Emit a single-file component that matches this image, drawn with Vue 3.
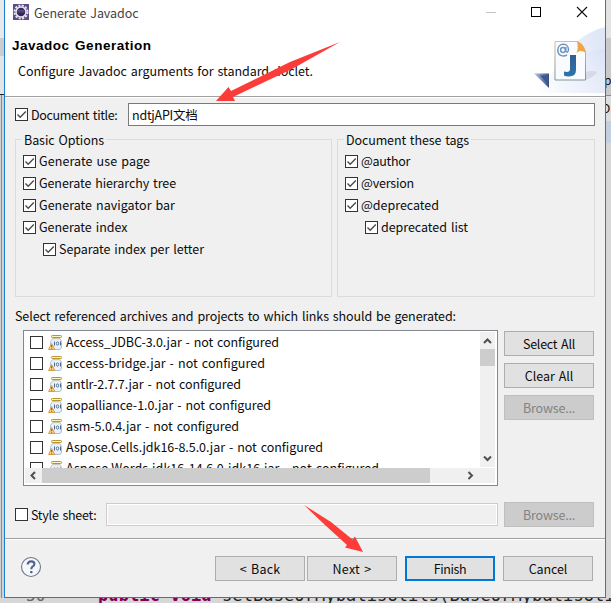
<script setup>
const basicOptions = [
  { text: 'Generate use page', w: 111 },
  { text: 'Generate hierarchy tree', w: 137 },
  { text: 'Generate navigator bar', w: 136 },
  { text: 'Generate index', w: 88.5 },
  { text: 'Separate index per letter', w: 145, sub: true },
]
const tagOptions = [
  { text: '@author', w: 49 },
  { text: '@version', w: 53 },
  { text: '@deprecated', w: 78 },
  { text: 'deprecated list', w: 87, sub: true },
]
const archives = [
  { text: 'Access_JDBC-3.0.jar - not configured', w: 213 },
  { text: 'access-bridge.jar - not configured', w: 199 },
  { text: 'antlr-2.7.7.jar - not configured', w: 175 },
  { text: 'aopalliance-1.0.jar - not configured', w: 205 },
  { text: 'asm-5.0.4.jar - not configured', w: 173 },
  { text: 'Aspose.Cells.jdk16-8.5.0.jar - not configured', w: 257 },
  { text: 'Aspose.Words.jdk16-14.6.0-jdk16.jar - not configured', w: 313 },
]

// Spreads a label's letters so that it takes the given width.
const vFit = {
  mounted(el, { value }) {
    const natural = el.getBoundingClientRect().width
    const count = Array.from(el.textContent).length
    el.style.letterSpacing = (value - natural) / count + 'px'
  },
}
</script>

<template>
  <div class="desktop">
    <div class="behind-left"><i></i></div>
    <div class="behind-right"><span class="frag p">p</span><span class="frag d">D</span></div>
    <div class="behind-bottom">
      <span class="lineno">50</span>
      <span class="code"><b>public void</b> setBaseOrMybatisUtils(BaseOrMybatisUtils</span>
    </div>

    <div class="window">
      <header class="head">
        <div class="titlebar">
          <svg class="appicon" width="16" height="16" viewBox="0 0 16 16">
            <rect width="16" height="16" fill="#5d4b87" />
            <circle cx="8" cy="8" r="6.5" fill="none" stroke="#e6e3ec" stroke-width="2" stroke-dasharray="2.1 1.3" />
            <circle cx="8" cy="8" r="5" fill="#33275a" stroke="#e9e7ef" stroke-width="1.500" />
            <path d="M4.600 6.500h6.800M4.300 8h7.400" stroke="#6d5f96" stroke-width=".8" />
          </svg>
          <span class="wtitle"><span v-fit="104.5">Generate Javadoc</span></span>
          <svg class="winbtns" width="102" height="12" viewBox="0 0 102 12">
            <path d="M0 6.500h10" stroke="#c4c4c4" />
            <rect x="45.500" y="1.500" width="9" height="9" fill="none" stroke="#000" />
            <path d="M91 1l10 10M101 1L91 11" stroke="#111" stroke-width="1.1" />
          </svg>
        </div>
        <h1><span v-fit="139.5">Javadoc Generation</span></h1>
        <p><span v-fit="295">Configure Javadoc arguments for standard doclet.</span></p>
        <svg class="banner" width="74" height="68" viewBox="0 0 74 68">
          <defs>
            <linearGradient id="sky" x1="0" y1=".6" x2="1" y2=".4">
              <stop offset="0" stop-color="#fff" />
              <stop offset="1" stop-color="#dfe6f7" />
            </linearGradient>
            <linearGradient id="sky2" x1="0" y1="1" x2="1" y2="0">
              <stop offset=".2" stop-color="#fff" stop-opacity="0" />
              <stop offset="1" stop-color="#d4def4" />
            </linearGradient>
            <linearGradient id="page" x1="0" y1="0" x2="0" y2="1">
              <stop offset="0" stop-color="#d8be96" />
              <stop offset="1" stop-color="#7b9696" />
            </linearGradient>
            <linearGradient id="jay" x1="0" y1="0" x2="0" y2="1">
              <stop offset="0" stop-color="#2f5d93" />
              <stop offset="1" stop-color="#2d74ad" />
            </linearGradient>
            <linearGradient id="tri" x1="0" y1="0" x2="1" y2="0">
              <stop offset="0" stop-color="#b4cbe9" />
              <stop offset="1" stop-color="#314c86" />
            </linearGradient>
          </defs>
          <path d="M0 67C28 52 29 13 74 1V67Z" fill="url(#sky)" />
          <path d="M12 67C28 44 44 26 74 23V67Z" fill="url(#sky2)" opacity=".6" />
          <path d="M54 54C62 51 65 49 66 46C60 44 55 46 54 46Z" fill="#c8c6da" opacity=".5" />
          <path d="M3 47.500H18V62Z" fill="url(#tri)" />
          <path d="M9 49.500h7v7.500" fill="#3f568e" />
          <path d="M24 15.500H46.500L54.500 26V54H24Z" fill="#f9fbfe" stroke="url(#page)" />
          <path d="M46 15C47 20 47 23 45.500 27C49 24 52 25 55 27C54 21 51 17 46 15Z" fill="#efa448" />
          <path d="M39 29H45V44Q45 50.500 38 50.500Q34.500 50.500 33 49.500V45.500Q39 47 39 43Z" fill="url(#jay)" />
          <circle cx="32" cy="24" r="2.400" fill="none" stroke="#6c96c0" stroke-width="1.500" />
          <path d="M34.800 21V25.500Q37.200 27.500 37.500 23.300C37.200 16.500 27 16.500 26.800 24C26.800 30.500 33 31 36 28.800" fill="none" stroke="#6c96c0" stroke-width="1.500" />
        </svg>
      </header>

      <main>
        <div class="doctitle">
          <span class="check on"><svg viewBox="0 0 11 11"><path d="M1.500 5.500L4.200 8.200L9.800 2.600" /></svg></span>
          <label><span v-fit="86.500">Document title:</span></label>
          <div class="input"><span v-fit="65.500">ndtjAPI文档</span></div>
        </div>

        <div class="groups">
          <section class="group basic">
            <h2><span v-fit="80">Basic Options</span></h2>
            <div v-for="o in basicOptions" :key="o.text" class="opt" :class="{ sub: o.sub }">
              <span class="check on"><svg viewBox="0 0 11 11"><path d="M1.500 5.500L4.200 8.200L9.800 2.600" /></svg></span>
              <span v-fit="o.w">{{ o.text }}</span>
            </div>
          </section>
          <section class="group tags">
            <h2><span v-fit="123">Document these tags</span></h2>
            <div v-for="o in tagOptions" :key="o.text" class="opt" :class="{ sub: o.sub }">
              <span class="check on"><svg viewBox="0 0 11 11"><path d="M1.500 5.500L4.200 8.200L9.800 2.600" /></svg></span>
              <span v-fit="o.w">{{ o.text }}</span>
            </div>
          </section>
        </div>

        <div class="caption"><span v-fit="441">Select referenced archives and projects to which links should be generated:</span></div>

        <div class="archives">
          <div class="list">
            <div class="rows">
              <div v-for="a in archives" :key="a.text" class="row">
                <span class="check"></span>
                <svg width="15" height="17" viewBox="0 0 15 17">
                  <path d="M5 4.500Q2.500 6 2.500 8.500V13Q2.500 15.500 5 15.500H11Q13.500 15.500 13.500 13V8.500Q13.500 6 11.500 4.500Z" fill="#e9f1fb" stroke="#a9c0dc" />
                  <rect x="3.500" y="1.500" width="10" height="2" rx=".8" fill="#fff4bc" stroke="#b99531" />
                  <path d="M4.500 4.700h8" stroke="#dccb93" stroke-width=".8" />
                  <path d="M6.500 7.500V11.500M12.500 7.500V11.500" stroke="#4a6890" />
                  <ellipse cx="9.500" cy="9.500" rx="1.200" ry="1.600" fill="none" stroke="#4a6890" stroke-width=".9" />
                  <path d="M3.600 9.500L6.800 15.500H.6Z" fill="#ffd588" stroke="#dc9a3e" stroke-linejoin="round" />
                  <path d="M3.700 11v2.200M3.700 13.800v1" stroke="#6b4a1c" stroke-width=".9" />
                </svg>
                <span v-fit="a.w">{{ a.text }}</span>
              </div>
            </div>
            <div class="vbar">
              <svg width="15" height="17"><path d="M4 11L7.500 7.500L11 11" /></svg>
              <i></i>
              <svg width="15" height="17"><path d="M4 6.500L7.500 10L11 6.500" /></svg>
            </div>
            <div class="hbar">
              <svg width="17" height="15"><path d="M10 4L6.500 7.500L10 11" /></svg>
              <i></i>
              <svg width="17" height="15"><path d="M6.500 4L10 7.500L6.500 11" /></svg>
            </div>
          </div>
          <div class="side">
            <button><span v-fit="52">Select All</span></button>
            <button><span v-fit="48.500">Clear All</span></button>
            <button class="off"><span v-fit="52">Browse...</span></button>
          </div>
        </div>

        <div class="style">
          <span class="check"></span>
          <label><span v-fit="65.500">Style sheet:</span></label>
          <div class="input off"></div>
          <button class="off"><span v-fit="52">Browse...</span></button>
        </div>
      </main>

      <footer>
        <svg class="help" width="22" height="22" viewBox="0 0 22 22">
          <circle cx="11" cy="11" r="9.500" fill="#f5f7fa" stroke="#6b7890" stroke-width="1.100" />
          <path d="M7.700 8.500Q7.700 5.400 11.200 5.400Q14.400 5.400 14.400 8Q14.400 9.600 12.500 10.700Q11.300 11.500 11.300 13.300" fill="none" stroke="#50628e" stroke-width="2.100" />
          <rect x="10.100" y="14.900" width="2.400" height="2.300" rx=".6" fill="#50628e" />
        </svg>
        <button class="back"><span v-fit="40.500">&lt; Back</span></button>
        <button class="next"><span v-fit="39">Next &gt;</span></button>
        <button class="finish"><span v-fit="32.500">Finish</span></button>
        <button><span v-fit="38.500">Cancel</span></button>
      </footer>
    </div>

    <svg class="arrows" width="611" height="603" viewBox="0 0 611 603">
      <path d="M216 101L228.500 87L231 91L290 62L340 42L292 69L233 97L235 101Z" />
      <path d="M304 505L331 522L352.500 539.500L355 536.500L363 552L345 547.500L347 545L325 525Z" />
    </svg>
  </div>
</template>

<style>
body { overflow: hidden; background: #dcdcdc; }
</style>

<style scoped>
* { box-sizing: border-box; }
.desktop { position: relative; width: 611px; height: 603px; overflow: hidden; background: #e4e4e4; font: 12.5px/22px "Noto Sans CJK SC", sans-serif; color: #0c0c0c; white-space: nowrap; word-spacing: 1.2px; }
.behind-left { position: absolute; left: 0; top: 0; width: 4px; height: 603px; background: linear-gradient(#e9e9e9 0 38px, #ccc 38px 56px, #e4e4e4 56px 94px, #222 94px 95px, #d2d2d2 95px); }
.behind-left i { position: absolute; left: 1px; top: 95px; width: 1px; height: 508px; background: #8d8d8d; }
.behind-right { position: absolute; left: 606px; top: 0; width: 5px; height: 603px; overflow: hidden; background: linear-gradient(#e3e3e3 0 38px, #c9c9c9 38px 95px, #888 95px 96px, #ddd 96px 121px, #c2d0df 121px 143px, #d6d6d6 143px); }
.frag { position: absolute; left: -2px; font-size: 12px; }
.p { top: 69px; }
.d { top: 97px; left: -4px; }
.behind-bottom { position: absolute; left: 0; top: 598px; width: 611px; height: 5px; overflow: hidden; background: #d7d7d7; font: 17px/20px "DejaVu Sans Mono", monospace; color: #222; word-spacing: 0; }
.lineno { position: absolute; left: 26px; top: -12px; color: #666; font-size: 16px; }
.code { position: absolute; left: 98px; top: -13px; letter-spacing: .1px; }
.code b { color: #7f0055; }

.window { position: relative; display: flex; flex-direction: column; width: 602px; height: 598px; margin-left: 4px; border: 1px solid #1a7fd0; border-top: 0; background: #f0f0f0; }
.head { position: relative; height: 98px; background: #fff; border-bottom: 1px solid #fff; box-shadow: inset 0 -1px #a0a0a0; }
.titlebar { display: flex; height: 26px; padding: 4px 0 0 8px; color: #444; }
.wtitle { width: 457px; padding-left: 5px; line-height: 17px; }
.winbtns { margin-top: 2px; }
h1, h2, p { margin: 0; font-weight: normal; font-size: inherit; }
h1 { padding-left: 7px; height: 34px; font: bold 13.5px/39px "Liberation Sans", sans-serif; color: #000; }
p { padding-left: 13px; line-height: 21px; }
.banner { position: absolute; right: 0; bottom: 3px; }

.check { flex: none; width: 13px; height: 13px; border: 1px solid #333; background: #fff; }
.check svg { display: block; width: 11px; height: 11px; }
.check path { fill: none; stroke: #4a4a4a; stroke-width: 1.4; }
main { display: flex; flex-direction: column; height: 440px; padding: 5px 0 0 10px; }
.doctitle, .style, .opt, .row { display: flex; align-items: center; }
.doctitle { height: 23px; }
.doctitle label { width: 100px; padding-left: 3px; }
.doctitle .input { width: 467px; }
.input { height: 23px; padding-left: 3px; line-height: 21px; background: #fff; border: 1px solid #7a7a7a; }
.groups { display: flex; gap: 5px; margin-top: 13px; }
.group { height: 158px; border: 1px solid #dcdcdc; padding: 0 0 0 7px; }
.basic { width: 317px; }
.tags { width: 258px; }
h2 { width: max-content; height: 21px; margin: 0 0 -11px -1px; padding: 0 2px; background: #f0f0f0; line-height: 20px; transform: translateY(-10px); }
.opt { height: 22px; gap: 3px; line-height: 20px; }
.opt > span:last-child, .row > span:last-child { padding-bottom: 1px; }
.opt.sub { padding-left: 20px; }
.caption { margin-top: 8px; height: 25px; }
.archives { display: flex; gap: 6px; height: 156px; margin: 0 0 0 8px; }
.list { display: grid; grid-template: 136px 15px / 455px 15px; width: 475px; height: 156px; padding: 1px; border: 1px solid #828790; background: #fff; }
.rows { overflow: hidden; }
.row { height: 21px; padding-left: 5px; line-height: 20px; }
.row svg { margin: 0 3px 0 5px; }
.vbar { display: flex; flex-direction: column; height: 135px; background: #f0f0f0; }
.vbar i { height: 17px; background: #cdcdcd; }
.vbar svg:last-child { margin-top: auto; }
.hbar { grid-column: 1 / 3; display: flex; background: #f0f0f0; }
.hbar i { width: 388px; background: #cdcdcd; }
.hbar svg:last-child { margin-left: 32px; }
.vbar path, .hbar path { fill: none; stroke: #505050; stroke-width: 2; }
button { width: 90px; height: 25px; padding: 0 0 1px; flex: none; background: #e1e1e1; border: 1px solid #adadad; font: inherit; line-height: 21px; color: inherit; word-spacing: inherit; }
button.off { background: #ccc; border-color: #bfbfbf; color: #838383; }
.side { display: flex; flex-direction: column; gap: 7px; padding-top: 1px; }
.style { margin-top: 16px; height: 25px; }
.style label { width: 78px; padding-left: 3px; }
.style .input { width: 392px; margin-right: 6px; }
.input.off { background: #f0f0f0; border-color: #ccc; box-shadow: inset 0 0 0 1px #fff; }
footer { display: flex; height: 59px; padding: 17px 0 0 15px; border-top: 1px solid #a0a0a0; box-shadow: inset 0 1px #fff; }
.back { margin-left: 173px; }
.next { margin: 0 8px 0 2px; }
.finish { border: 2px solid #0078d7; margin-right: 8px; line-height: 19px; }
.arrows { position: absolute; left: 0; top: 0; }
.arrows path { fill: #fb3c38; }
</style>
